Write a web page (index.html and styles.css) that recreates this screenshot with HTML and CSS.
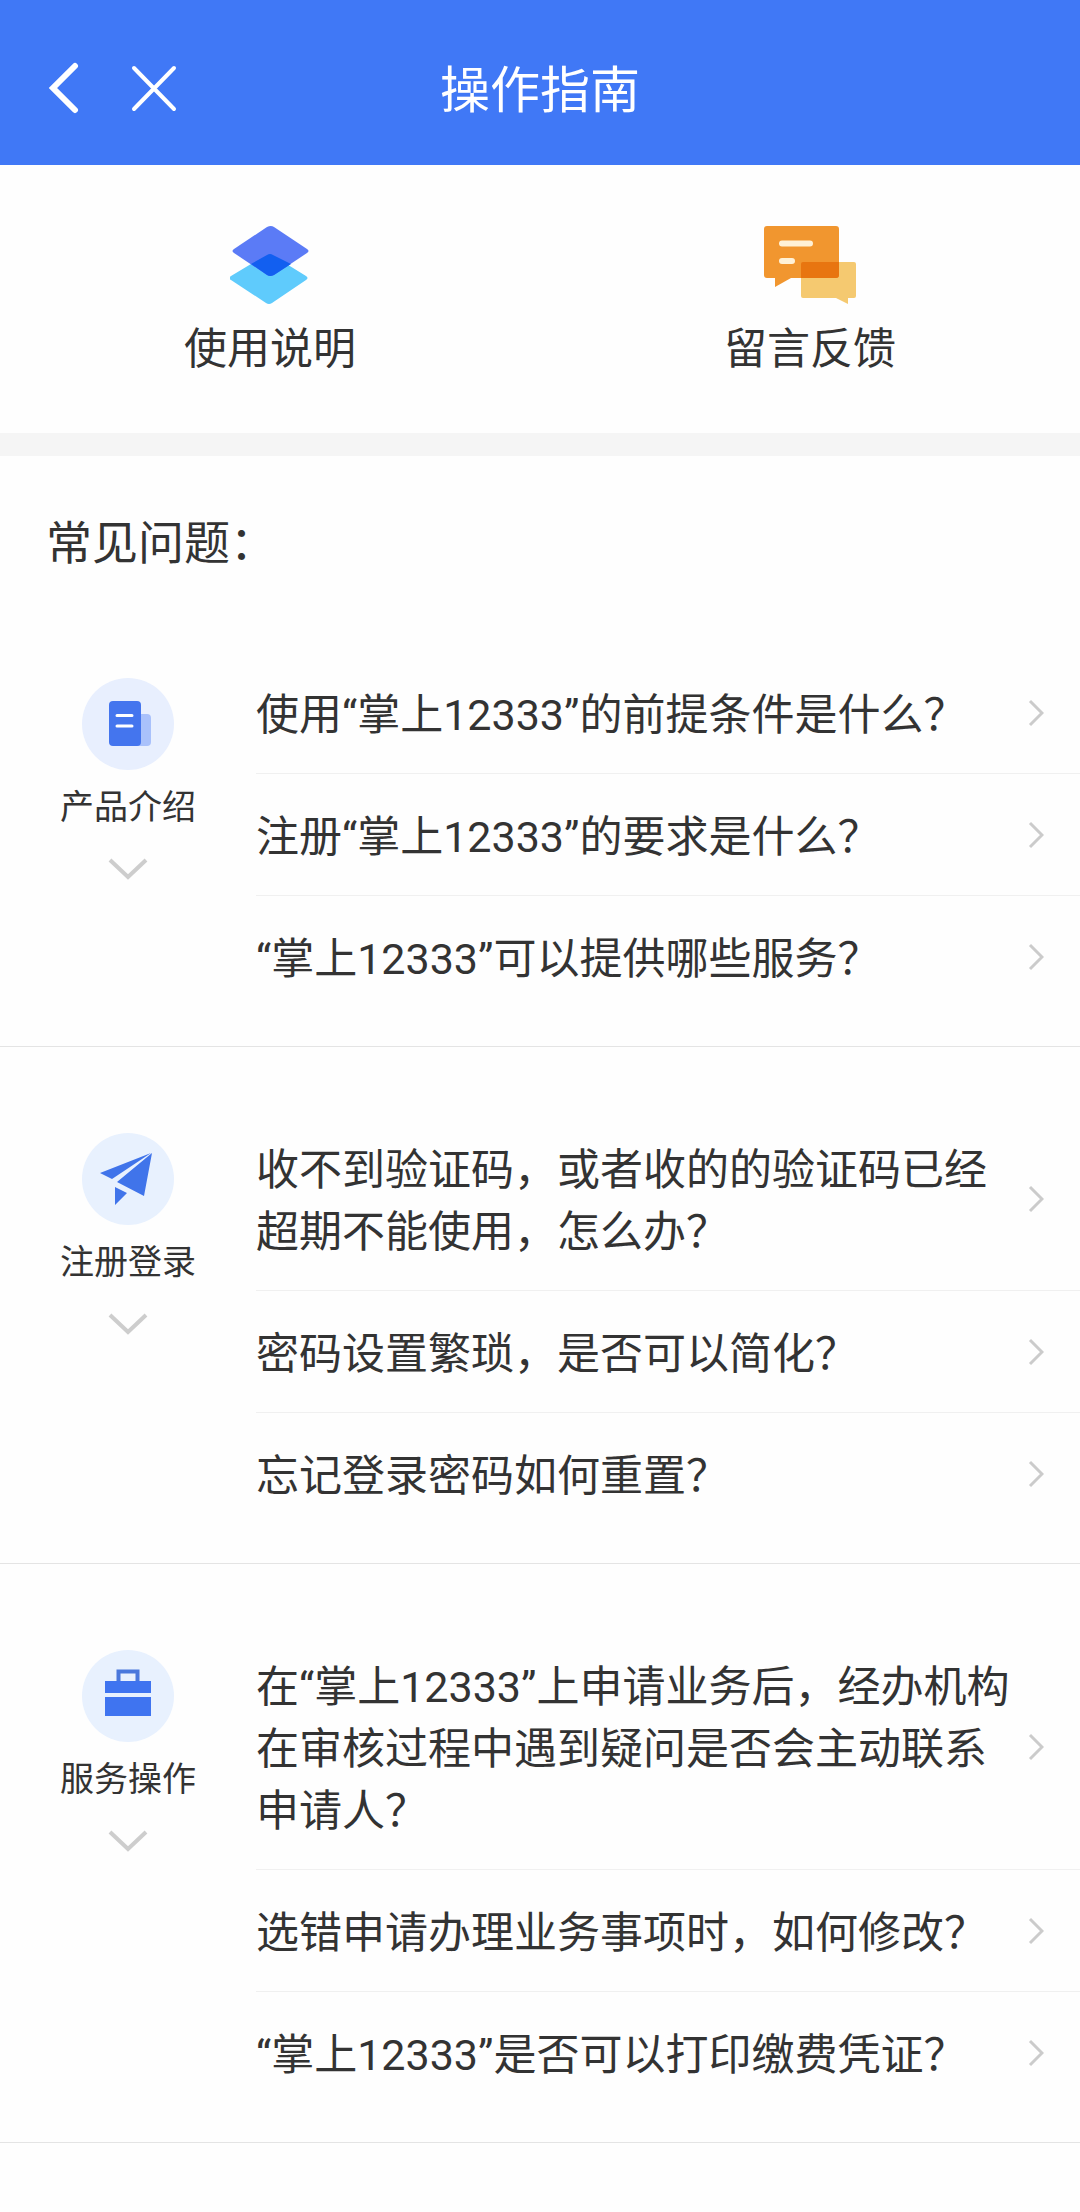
FILE: index.html
```html
<!DOCTYPE html>
<html lang="zh-CN">
<head>
<meta charset="utf-8">
<meta name="viewport" content="width=device-width, initial-scale=1">
<title>操作指南</title>
<link rel="stylesheet" href="styles.css">
</head>
<body>
<svg class="sprite" aria-hidden="true">
  <symbol id="arrow" viewBox="0 0 16 28"><path d="M2 2l12 12L2 26" fill="none" stroke="#cbcbcb" stroke-width="3"/></symbol>
  <symbol id="down" viewBox="0 0 40 24"><path d="M2 2l18 17L38 2" fill="none" stroke="#cdcdcd" stroke-width="4"/></symbol>
</svg>

<header class="topbar">
  <nav class="topbar-nav">
    <button class="icon-button" type="button" aria-label="返回">
      <svg width="32" height="52" viewBox="0 0 32 52"><path d="M27 4L5 26l22 22" fill="none" stroke="#fff" stroke-width="6" stroke-linecap="round"/></svg>
    </button>
    <button class="icon-button" type="button" aria-label="关闭">
      <svg width="48" height="52" viewBox="0 0 48 52"><path d="M4 6l40 41M44 6L4 47" fill="none" stroke="#fff" stroke-width="4" stroke-linecap="round"/></svg>
    </button>
  </nav>
  <h1 class="topbar-title">操作指南</h1>
</header>

<main>
  <nav class="shortcuts">
    <a class="shortcut" href="#guide">
      <svg width="80" height="80" viewBox="0 0 80 80">
        <path d="M36 30q3-2 6 0l34 21q3 2 0 4L42 78q-3 2-6 0L1 55q-3-2 0-4z" fill="#5fcbfc"/>
        <path d="M37 2q4-2 7 0l33 22q3 2 0 4L44 50q-4 2-7 0L4 28q-3-2 0-4z" fill="#5b7bf6"/>
        <path d="M37 30q3-2 6 0l18 9-17 11q-4 2-7 0L21 39z" fill="#125ff0"/>
      </svg>
      <span>使用说明</span>
    </a>
    <a class="shortcut" href="#feedback">
      <svg width="92" height="80" viewBox="0 0 92 80">
        <path d="M39 37h51q2 0 2 2v32q0 2-2 2h-6v6l-12-6H39q-2 0-2-2V39q0-2 2-2z" fill="#f5c970"/>
        <path d="M3 1h69q3 0 3 3v46q0 3-3 3H27l-16 9v-9H3q-3 0-3-3V4q0-3 3-3z" fill="#f1962f"/>
        <path d="M39 37h36v13q0 3-3 3H37V39q0-2 2-2z" fill="#e87510"/>
        <path d="M18 18.500h28M18 36h10" stroke="#fff1d6" stroke-width="6" stroke-linecap="round"/>
      </svg>
      <span>留言反馈</span>
    </a>
  </nav>

  <section class="faq">
    <h2 class="faq-title">常见问题：</h2>

    <section class="group">
      <button class="category" type="button" aria-expanded="true">
        <svg width="92" height="92" viewBox="0 0 92 92">
          <circle cx="46" cy="46" r="46" fill="#e8effe"/>
          <rect x="50" y="36" width="19" height="32" rx="4" fill="#a9c1fb"/>
          <rect x="27" y="23" width="32" height="45" rx="4" fill="#4475ee"/>
          <path d="M35 37.500h15M35 48h15" stroke="#fff" stroke-width="3" stroke-linecap="round"/>
        </svg>
        <span class="category-name">产品介绍</span>
        <svg width="40" height="24"><use href="#down"/></svg>
      </button>
      <ul class="questions">
        <li><a class="question" href="#q1"><span class="question-text">使用“掌上12333”的前提条件是什么？</span><svg class="arrow"><use href="#arrow"/></svg></a></li>
        <li><a class="question" href="#q2"><span class="question-text">注册“掌上12333”的要求是什么？</span><svg class="arrow"><use href="#arrow"/></svg></a></li>
        <li><a class="question" href="#q3"><span class="question-text">“掌上12333”可以提供哪些服务？</span><svg class="arrow"><use href="#arrow"/></svg></a></li>
      </ul>
    </section>

    <section class="group">
      <button class="category" type="button" aria-expanded="true">
        <svg width="92" height="92" viewBox="0 0 92 92">
          <circle cx="46" cy="46" r="46" fill="#e8f1fe"/>
          <path d="M18 40L69 20 30 46zM70 20l-8 43-27-14zM33 54l12 6-12 12z" fill="#4074ea"/>
        </svg>
        <span class="category-name">注册登录</span>
        <svg width="40" height="24"><use href="#down"/></svg>
      </button>
      <ul class="questions">
        <li><a class="question" href="#q4"><span class="question-text">收不到验证码，或者收的的验证码已经超期不能使用，怎么办？</span><svg class="arrow"><use href="#arrow"/></svg></a></li>
        <li><a class="question" href="#q5"><span class="question-text">密码设置繁琐，是否可以简化？</span><svg class="arrow"><use href="#arrow"/></svg></a></li>
        <li><a class="question" href="#q6"><span class="question-text">忘记登录密码如何重置？</span><svg class="arrow"><use href="#arrow"/></svg></a></li>
      </ul>
    </section>

    <section class="group">
      <button class="category" type="button" aria-expanded="true">
        <svg width="92" height="92" viewBox="0 0 92 92">
          <circle cx="46" cy="46" r="46" fill="#e8f1fe"/>
          <path d="M23 31h46v12H23zM23 47h46v19H23z" fill="#3f74f0"/>
          <path d="M36.500 31v-9.500h19V31" fill="none" stroke="#4a78dc" stroke-width="4"/>
        </svg>
        <span class="category-name">服务操作</span>
        <svg width="40" height="24"><use href="#down"/></svg>
      </button>
      <ul class="questions">
        <li><a class="question" href="#q7"><span class="question-text">在“掌上12333”上申请业务后，经办机构在审核过程中遇到疑问是否会主动联系申请人？</span><svg class="arrow"><use href="#arrow"/></svg></a></li>
        <li><a class="question" href="#q8"><span class="question-text">选错申请办理业务事项时，如何修改？</span><svg class="arrow"><use href="#arrow"/></svg></a></li>
        <li><a class="question" href="#q9"><span class="question-text">“掌上12333”是否可以打印缴费凭证？</span><svg class="arrow"><use href="#arrow"/></svg></a></li>
      </ul>
    </section>
  </section>
</main>
</body>
</html>
```
FILE: styles.css
```css
* {
  box-sizing: border-box;
}

body {
  margin: 0;
  background: #fefefe;
  color: #333;
  font-family: Roboto, "Noto Sans CJK SC", sans-serif;
  font-size: 43px;
  line-height: 62px;
}

button {
  padding: 0;
  border: 0;
  background: none;
  color: inherit;
  font: inherit;
  cursor: pointer;
}

a {
  color: inherit;
  text-decoration: none;
}

svg {
  display: block;
  flex: none;
}

.sprite {
  position: absolute;
  width: 0;
  height: 0;
}

/* Top bar */
.topbar {
  display: grid;
  grid-template-columns: 1fr auto 1fr;
  align-items: center;
  padding: 49px 48px 38px;
  background: #4078f6;
  color: #fff;
}

.topbar-nav {
  display: flex;
  align-items: center;
  gap: 50px;
}

.topbar-title {
  margin: 0;
  padding-top: 6px;
  font-size: 50px;
  font-weight: 400;
  line-height: 72px;
}

/* Shortcuts */
.shortcuts {
  display: grid;
  grid-template-columns: 1fr 1fr;
  padding: 60px 0 53px;
  border-bottom: 23px solid #f5f5f5;
}

.shortcut {
  display: flex;
  flex-direction: column;
  align-items: center;
  gap: 13px;
}

/* Questions */
.faq-title {
  margin: 0;
  padding: 56px 46px 18px;
  font-size: 46px;
  font-weight: 400;
}

.group {
  display: grid;
  grid-template-columns: 256px 1fr;
  align-items: start;
  border-bottom: 1px solid #e4e4e4;
}

.category {
  display: flex;
  flex-direction: column;
  align-items: center;
  padding-top: 86px;
}

.category-name {
  padding: 13px 0 27px;
  font-size: 34px;
  line-height: 48px;
}

.questions {
  margin: 0;
  padding: 60px 0 29px;
  list-style: none;
}

.questions li + li {
  border-top: 1px solid #f0f0f0;
}

.question {
  display: flex;
  align-items: center;
  justify-content: space-between;
  gap: 12px;
  padding: 28px 36px 27px 0;
}

.question-text {
  padding-top: 4px;
}

.arrow {
  width: 16px;
  height: 28px;
}
```
